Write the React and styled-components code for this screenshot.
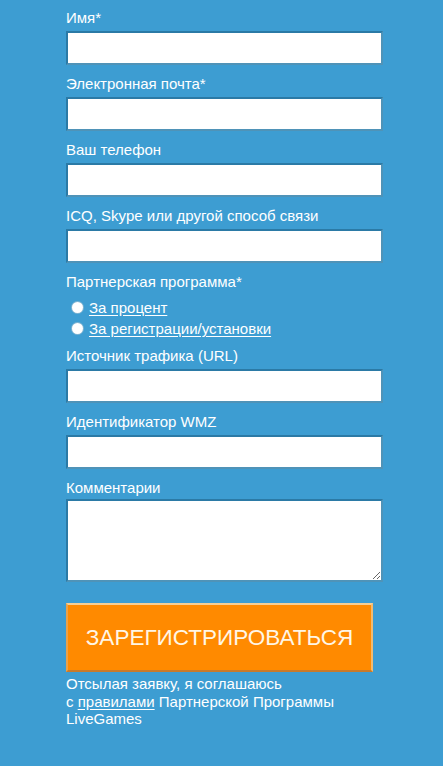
import React from "react";
import styled, { createGlobalStyle } from "styled-components";

const GlobalStyle = createGlobalStyle`
  html, body {
    margin: 0;
    padding: 0;
    background: #3d9dd2;
  }
  body {
    font-family: "Liberation Sans", Arial, sans-serif;
  }
`;

const Page = styled.div`
  padding: 9px 0 20px 66px;
  width: 317px;
  color: #fff;
  font-family: "Liberation Sans", Arial, sans-serif;
`;

const Field = styled.div`
  display: flex;
  flex-direction: column;
  margin-bottom: ${(p) => p.gap || 10}px;
`;

const Label = styled.label`
  font-size: 15px;
  line-height: 17px;
  margin-bottom: ${(p) => p.space || 5}px;
  color: #fff;
`;

const Input = styled.input`
  box-sizing: border-box;
  width: 317px;
  height: 34px;
  margin: 0;
  border: 2px solid #2b7aa6;
  border-right-color: #4f93b8;
  border-bottom-color: #4f93b8;
  background: #fff;
  font: 15px "Liberation Sans", Arial, sans-serif;
  padding: 4px 8px;
  outline: none;
`;

const TextArea = styled.textarea`
  box-sizing: border-box;
  display: block;
  width: 317px;
  height: 83px;
  margin: 0;
  border: 2px solid #2b7aa6;
  border-right-color: #4f93b8;
  border-bottom-color: #4f93b8;
  background: #fff;
  font: 15px "Liberation Sans", Arial, sans-serif;
  padding: 4px 8px;
  outline: none;
`;

const RadioGroup = styled.div`
  display: flex;
  flex-direction: column;
  gap: 4px;
  padding-left: 6px;
  margin-top: 4px;
`;

const RadioRow = styled.label`
  display: flex;
  align-items: center;
  gap: 6px;
  font-size: 15px;
  line-height: 17px;
  cursor: pointer;
`;

const Dot = styled.span`
  width: 11px;
  height: 11px;
  border-radius: 50%;
  background: #fff;
  box-shadow: 0 0 0 1px #7fb4d2;
`;

const Link = styled.a`
  color: #fff;
  text-decoration: underline;
  text-underline-offset: 2px;
`;

const Button = styled.button`
  box-sizing: border-box;
  width: 307px;
  height: 69px;
  margin: 0;
  background: #ff8a00;
  border: 2px solid;
  border-color: #f6cf95 #f3bb6e #c97a2a #e9a24c;
  color: #fff6e6;
  font: 22.5px "Liberation Sans", Arial, sans-serif;
  text-transform: uppercase;
  cursor: pointer;
`;

const Note = styled.p`
  margin: 3px 0 0;
  font-size: 15px;
  line-height: 17.5px;
  width: 300px;
`;

const fields = [
  { label: "Имя*" },
  { label: "Электронная почта*" },
  { label: "Ваш телефон" },
  { label: "ICQ, Skype или другой способ связи" },
];

export default function App() {
  return (
    <>
      <GlobalStyle />
      <Page>
        {fields.map((f) => (
          <Field key={f.label}>
            <Label>{f.label}</Label>
            <Input type="text" />
          </Field>
        ))}
        <Field gap={10}>
          <Label>Партнерская программа*</Label>
          <RadioGroup>
            <RadioRow>
              <Dot />
              <Link href="#">За процент</Link>
            </RadioRow>
            <RadioRow>
              <Dot />
              <Link href="#">За регистрации/установки</Link>
            </RadioRow>
          </RadioGroup>
        </Field>
        <Field>
          <Label>Источник трафика (URL)</Label>
          <Input type="text" />
        </Field>
        <Field>
          <Label>Идентификатор WMZ</Label>
          <Input type="text" />
        </Field>
        <Field gap={21}>
          <Label space={3}>Комментарии</Label>
          <TextArea />
        </Field>
        <Button type="button">Зарегистрироваться</Button>
        <Note>
          Отсылая заявку, я соглашаюсь
          <br />с <Link href="#">правилами</Link> Партнерской Программы LiveGames
        </Note>
      </Page>
    </>
  );
}
